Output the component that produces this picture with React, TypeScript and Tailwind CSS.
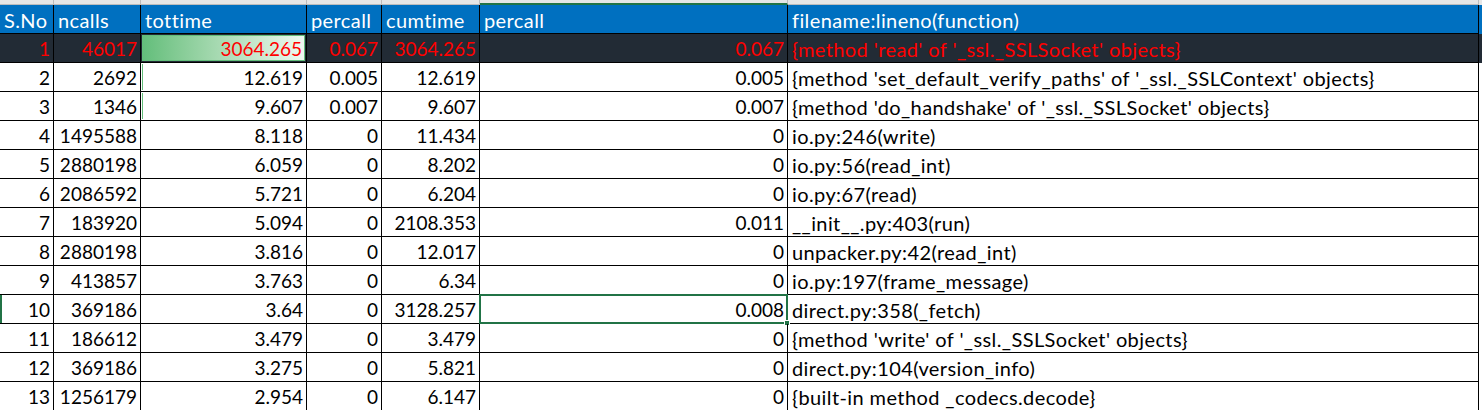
import React from "react";

type Row = {
  no: number;
  ncalls: string;
  tottime: string;
  percall: string;
  cumtime: string;
  percall2: string;
  where: string;
};

const ROWS: Row[] = [
  { no: 1, ncalls: "46017", tottime: "3064.265", percall: "0.067", cumtime: "3064.265", percall2: "0.067", where: "{method 'read' of '_ssl._SSLSocket' objects}" },
  { no: 2, ncalls: "2692", tottime: "12.619", percall: "0.005", cumtime: "12.619", percall2: "0.005", where: "{method 'set_default_verify_paths' of '_ssl._SSLContext' objects}" },
  { no: 3, ncalls: "1346", tottime: "9.607", percall: "0.007", cumtime: "9.607", percall2: "0.007", where: "{method 'do_handshake' of '_ssl._SSLSocket' objects}" },
  { no: 4, ncalls: "1495588", tottime: "8.118", percall: "0", cumtime: "11.434", percall2: "0", where: "io.py:246(write)" },
  { no: 5, ncalls: "2880198", tottime: "6.059", percall: "0", cumtime: "8.202", percall2: "0", where: "io.py:56(read_int)" },
  { no: 6, ncalls: "2086592", tottime: "5.721", percall: "0", cumtime: "6.204", percall2: "0", where: "io.py:67(read)" },
  { no: 7, ncalls: "183920", tottime: "5.094", percall: "0", cumtime: "2108.353", percall2: "0.011", where: "__init__.py:403(run)" },
  { no: 8, ncalls: "2880198", tottime: "3.816", percall: "0", cumtime: "12.017", percall2: "0", where: "unpacker.py:42(read_int)" },
  { no: 9, ncalls: "413857", tottime: "3.763", percall: "0", cumtime: "6.34", percall2: "0", where: "io.py:197(frame_message)" },
  { no: 10, ncalls: "369186", tottime: "3.64", percall: "0", cumtime: "3128.257", percall2: "0.008", where: "direct.py:358(_fetch)" },
  { no: 11, ncalls: "186612", tottime: "3.479", percall: "0", cumtime: "3.479", percall2: "0", where: "{method 'write' of '_ssl._SSLSocket' objects}" },
  { no: 12, ncalls: "369186", tottime: "3.275", percall: "0", cumtime: "5.821", percall2: "0", where: "direct.py:104(version_info)" },
  { no: 13, ncalls: "1256179", tottime: "2.954", percall: "0", cumtime: "6.147", percall2: "0", where: "{built-in method _codecs.decode}" },
];

const HEADERS = ["S.No", "ncalls", "tottime", "percall", "cumtime", "percall", "filename:lineno(function)"];

const COLS = "grid grid-cols-[54px_87px_166px_75px_98px_308px_691px]";
const cell = "h-[29px] border-r border-b border-black flex items-center overflow-hidden whitespace-nowrap";
// numbers sit a touch narrower than the text columns
const num = "justify-end pr-[3px] pt-[2px] text-[19px] tracking-normal";

function Num({ children, first }: { children: React.ReactNode; first?: boolean }) {
  return <div className={`${cell} ${num} ${first ? "text-[#ff0000]" : ""}`}>{children}</div>;
}

export default function App() {
  return (
    <div className="w-[1482px] h-[410px] overflow-hidden bg-white text-black text-[20px] tracking-[0.4px] font-['Lato',sans-serif]">
      {/* column letters strip, cut off at the top */}
      <div className={`${COLS} h-[5px] bg-[#e6e6e6]`}>
        {HEADERS.map((_, i) => (
          <div
            key={i}
            className={`h-[5px] border-r border-[#bcbcbc] ${i === 5 ? "border-b-2 border-b-[#217346]" : "border-b border-b-[#bcbcbc]"}`}
          />
        ))}
      </div>

      {/* header */}
      <div className={`${COLS} bg-[#0070c0] text-white`}>
        {HEADERS.map((h, i) => (
          <div key={i} className={`${cell} pl-[4px] pt-[1px]`}>
            {h}
          </div>
        ))}
      </div>

      {ROWS.map((r, idx) => {
        const first = idx === 0;
        return (
          <div key={r.no} className={`${COLS} ${first ? "bg-[#222b35] text-[#ff0000]" : ""}`}>
            <div className={`${cell} ${num} ${r.no === 10 ? "shadow-[inset_2px_0_0_#217346]" : ""}`}>
              {r.no}
            </div>
            <Num first={first}>{r.ncalls}</Num>
            <div className={`${cell} p-[1px] text-[19px] tracking-normal`}>
              <div
                className={`h-full w-full flex items-center justify-end pr-[2px] pt-[2px] ${
                  first
                    ? "border border-[#63be7b] bg-gradient-to-r from-[#63be7b] to-[#eef8f1]"
                    : idx <= 2
                    ? "border-l border-[#63be7b]"
                    : ""
                }`}
              >
                {r.tottime}
              </div>
            </div>
            <Num first={first}>{r.percall}</Num>
            <Num first={first}>{r.cumtime}</Num>
            <div className={`${cell} ${num} relative overflow-visible`}>
              {r.percall2}
              {r.no === 10 && (
                <>
                  <div className="absolute -left-px -top-px -right-px -bottom-px border-2 border-[#217346] pointer-events-none" />
                  <div className="absolute -right-[3px] -bottom-[3px] w-[6px] h-[6px] bg-[#217346] border border-white" />
                </>
              )}
            </div>
            <div className={`${cell} pl-[4px] pt-[2px]`}>{r.where}</div>
          </div>
        );
      })}
    </div>
  );
}
